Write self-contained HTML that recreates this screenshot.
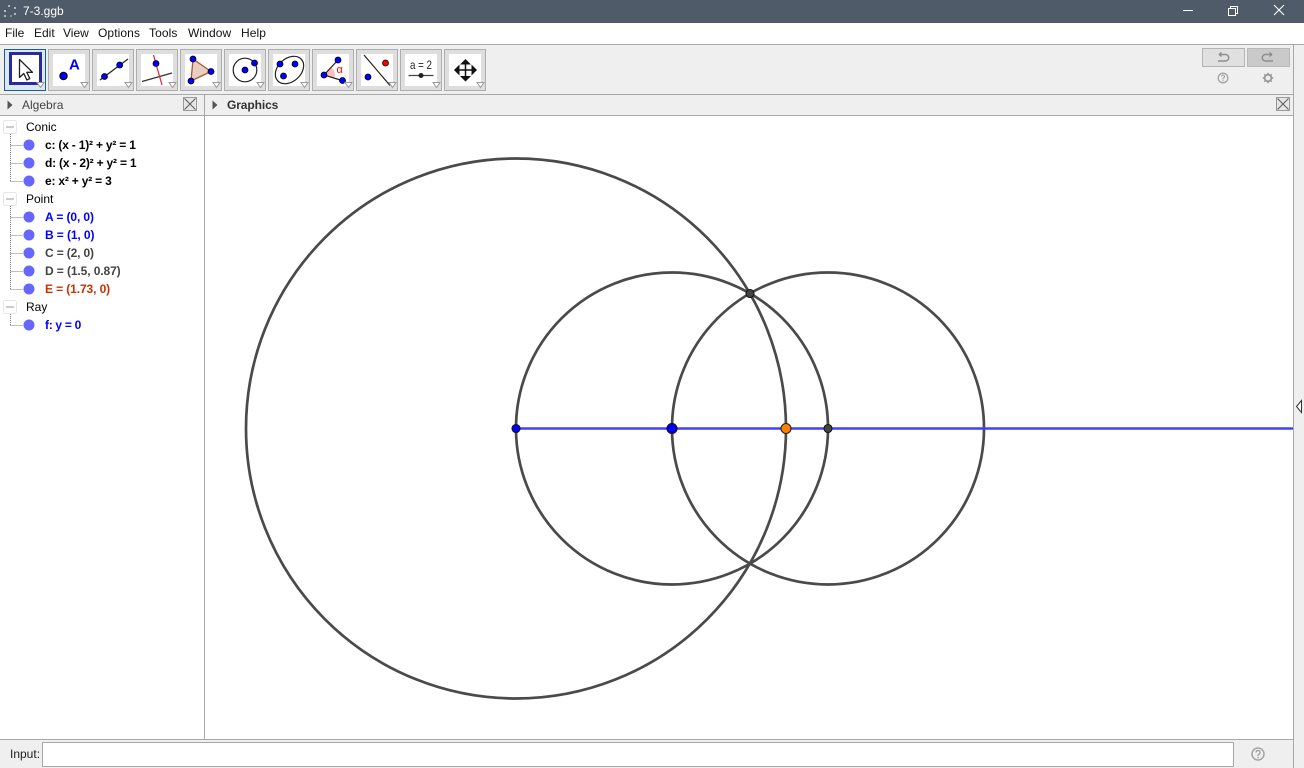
<!DOCTYPE html>
<html><head><meta charset="utf-8"><title>7-3.ggb</title>
<style>
html,body{margin:0;padding:0;width:1304px;height:768px;overflow:hidden;background:#efefef}
body{position:relative;font-family:"Liberation Sans",sans-serif;font-size:12px;color:#000}
.a{position:absolute;white-space:pre}
.m{top:25px;line-height:16px;font-size:12px;color:#111}
.r{left:45px;font-weight:bold;line-height:18px;height:18px;letter-spacing:-.1px}
.g{left:26px;line-height:18px;height:18px}
svg{position:absolute;left:0;top:0}
</style></head><body>
<div class="a" style="left:0;top:0;width:1304px;height:23px;background:#4f5b69"></div>
<div class="a" style="left:23px;top:4px;color:#fff;line-height:15px;font-size:12px">7-3.ggb</div>
<div class="a" style="left:0;top:23px;width:1304px;height:21px;background:#fff"></div>
<div class="a m" style="left:5px">File</div>
<div class="a m" style="left:34px">Edit</div>
<div class="a m" style="left:63px">View</div>
<div class="a m" style="left:98px;letter-spacing:.1px">Options</div>
<div class="a m" style="left:149px;letter-spacing:.1px">Tools</div>
<div class="a m" style="left:188px;letter-spacing:.1px">Window</div>
<div class="a m" style="left:241px;letter-spacing:.1px">Help</div>

<div class="a" style="left:0;top:44px;width:1304px;height:1px;background:#a8a8a8"></div>
<div class="a" style="left:0;top:94px;width:1293px;height:1px;background:#a8a8a8"></div>
<div class="a" style="left:0;top:115px;width:1293px;height:1px;background:#a8a8a8"></div>

<div class="a" style="left:0;top:116px;width:204px;height:623px;background:#fff"></div>
<div class="a" style="left:205px;top:116px;width:1088px;height:623px;background:#fff"></div>
<div class="a" style="left:204px;top:95px;width:1px;height:644px;background:#a8a8a8"></div>
<div class="a" style="left:1293px;top:44px;width:1px;height:724px;background:#a8a8a8"></div>
<div class="a" style="left:0;top:739px;width:1293px;height:1px;background:#a8a8a8"></div>

<div class="a" style="left:22px;top:97px;line-height:16px;color:#444">Algebra</div>
<div class="a" style="left:227px;top:97px;line-height:16px;font-weight:bold;color:#333;letter-spacing:-.1px">Graphics</div>

<div class="a g" style="top:118px">Conic</div>
<div class="a r" style="top:136px;color:#000;letter-spacing:-.2px">c: (x - 1)² + y² = 1</div>
<div class="a r" style="top:154px;color:#000;letter-spacing:-.2px">d: (x - 2)² + y² = 1</div>
<div class="a r" style="top:172px;color:#000;letter-spacing:-.2px">e: x² + y² = 3</div>
<div class="a g" style="top:190px">Point</div>
<div class="a r" style="top:208px;color:#00f">A = (0, 0)</div>
<div class="a r" style="top:226px;color:#00f">B = (1, 0)</div>
<div class="a r" style="top:244px;color:#444;letter-spacing:-.15px">C = (2, 0)</div>
<div class="a r" style="top:262px;color:#444">D = (1.5, 0.87)</div>
<div class="a r" style="top:280px;color:#c83200">E = (1.73, 0)</div>
<div class="a g" style="top:298px">Ray</div>
<div class="a r" style="top:316px;color:#00f;letter-spacing:-.3px">f: y = 0</div>

<div class="a" style="left:10px;top:746px;line-height:16px;color:#222">Input:</div>
<div class="a" style="left:42px;top:742px;width:1190px;height:23px;background:#fff;border:1px solid #a8a8a8"></div>

<svg width="1304" height="768" viewBox="0 0 1304 768" fill="none">
<!-- title icon -->
<g fill="#c9d3e6"><circle cx="5" cy="11" r="1"/><circle cx="9" cy="6" r="1"/><circle cx="15" cy="8" r="1"/><circle cx="15" cy="14" r="1"/><circle cx="5" cy="16" r="1"/><circle cx="11" cy="16" r=".8"/></g>
<!-- window controls -->
<path d="M1183 10.5h10" stroke="#fff"/>
<path d="M1228.5 8.500h7v7h-7zM1230.500 8.500v-2h7v7h-2" stroke="#fff"/>
<path d="M1274 5l10 10M1284 5l-10 10" stroke="#fff" stroke-width="1.100"/>

<!-- toolbar buttons -->
<g id="btns">
<rect x="4.500" y="49.500" width="41" height="41" fill="#d9e8f3" stroke="#1a5e8c"/>
<rect x="10.500" y="53.500" width="30" height="30" fill="#fff" stroke="#2a2a9c" stroke-width="3"/>
<g fill="#dedede" stroke="#aeaeae">
<rect x="48.500" y="49.500" width="41" height="41"/><rect x="92.500" y="49.500" width="41" height="41"/><rect x="136.500" y="49.500" width="41" height="41"/><rect x="180.500" y="49.500" width="41" height="41"/><rect x="224.500" y="49.500" width="41" height="41"/><rect x="268.500" y="49.500" width="41" height="41"/><rect x="312.500" y="49.500" width="41" height="41"/><rect x="356.500" y="49.500" width="41" height="41"/><rect x="400.500" y="49.500" width="41" height="41"/><rect x="444.500" y="49.500" width="41" height="41"/>
</g>
<g fill="#fff"><rect x="53" y="54" width="32" height="32"/><rect x="97" y="54" width="32" height="32"/><rect x="141" y="54" width="32" height="32"/><rect x="185" y="54" width="32" height="32"/><rect x="229" y="54" width="32" height="32"/><rect x="273" y="54" width="32" height="32"/><rect x="317" y="54" width="32" height="32"/><rect x="361" y="54" width="32" height="32"/><rect x="405" y="54" width="32" height="32"/><rect x="449" y="54" width="32" height="32"/></g>
</g>
<!-- arrow -->
<path d="M19.500 59.500v18l4.300-4 3 6.500 3-1.500-3-6.200h5.700z" fill="#fff" stroke="#222" stroke-width="1.300" stroke-linejoin="round"/>
<!-- point A -->
<circle cx="63.500" cy="76" r="3.700" fill="#00f" stroke="#000" stroke-width="1"/>
<text x="69" y="69.500" font-family="Liberation Sans" font-weight="bold" font-size="15" fill="#00f">A</text>
<!-- line -->
<path d="M100 80l28-21" stroke="#222" stroke-width="1.200"/>
<circle cx="104.500" cy="76.500" r="3" fill="#00f" stroke="#000" stroke-width=".8"/><circle cx="119.700" cy="65" r="3" fill="#00f" stroke="#000" stroke-width=".8"/>
<!-- perpendicular -->
<path d="M142 81.500l30-8.500" stroke="#333" stroke-width="1.300"/><path d="M153.500 55l8.500 30" stroke="#e8222c" stroke-width="1.200"/>
<circle cx="156" cy="63.500" r="3" fill="#00f" stroke="#000" stroke-width=".8"/>
<!-- polygon -->
<path d="M193 59l18 12.500-20 9.500z" fill="#e8cfc2" stroke="#a85a30" stroke-width="1.300"/>
<circle cx="193" cy="59" r="3" fill="#00f" stroke="#000" stroke-width=".8"/><circle cx="211" cy="71.500" r="3" fill="#00f" stroke="#000" stroke-width=".8"/><circle cx="191" cy="81" r="3" fill="#00f" stroke="#000" stroke-width=".8"/>
<!-- circle -->
<circle cx="245" cy="70" r="11.800" stroke="#222" stroke-width="1.200"/>
<circle cx="245" cy="70" r="3" fill="#00f" stroke="#000" stroke-width=".8"/><circle cx="254.500" cy="63" r="3" fill="#00f" stroke="#000" stroke-width=".8"/>
<!-- conic -->
<ellipse cx="289.500" cy="70" rx="16" ry="11.500" transform="rotate(-42 289.500 70)" stroke="#222" stroke-width="1.200"/>
<circle cx="280" cy="64" r="3" fill="#00f" stroke="#000" stroke-width=".8"/><circle cx="295" cy="64" r="3" fill="#00f" stroke="#000" stroke-width=".8"/><circle cx="283.500" cy="76" r="3" fill="#00f" stroke="#000" stroke-width=".8"/>
<!-- angle -->
<path d="M324 75L331 67A10.500 10.500 0 0 1 334.500 78z" fill="#ffbcbc"/>
<path d="M338 60l-14 15 18 5.500" stroke="#222" stroke-width="1.200"/>
<circle cx="338" cy="60" r="3" fill="#00f" stroke="#000" stroke-width=".8"/><circle cx="324" cy="75" r="3" fill="#00f" stroke="#000" stroke-width=".8"/><circle cx="342.500" cy="80.500" r="3" fill="#00f" stroke="#000" stroke-width=".8"/>
<text x="336.500" y="73" font-family="Liberation Sans" font-size="11" fill="#f00">α</text>
<!-- line parallel -->
<path d="M364 55l26 30.500" stroke="#222" stroke-width="1.200"/>
<circle cx="385.500" cy="63" r="3" fill="#f00" stroke="#000" stroke-width=".8"/><circle cx="368" cy="77" r="3" fill="#00f" stroke="#000" stroke-width=".8"/>
<!-- slider -->
<text x="410" y="69" font-family="Liberation Sans" font-size="12" fill="#222" textLength="22" lengthAdjust="spacingAndGlyphs">a = 2</text>
<path d="M408.500 75.500h25" stroke="#444" stroke-width="1.200"/><circle cx="421" cy="75.500" r="2.500" fill="#222"/>
<!-- move -->
<path d="M465.500 61v18M456 70h19" stroke="#111" stroke-width="1.500"/>
<path d="M465.500 59l-5.500 5.500h11zM465.500 81.500l-5.500-5.500h11zM454 70l5.500-5.500v11zM477 70l-5.500-5.500v11z" fill="#111"/>
<!-- dropdown triangles -->
<g fill="#fff" stroke="#999" stroke-width="1">
<path d="M37 82.500h7l-3.500 5z"/><path d="M81 82.500h7l-3.500 5z"/><path d="M125 82.500h7l-3.500 5z"/><path d="M169 82.500h7l-3.500 5z"/><path d="M213 82.500h7l-3.500 5z"/><path d="M257 82.500h7l-3.500 5z"/><path d="M301 82.500h7l-3.500 5z"/><path d="M345 82.500h7l-3.500 5z"/><path d="M389 82.500h7l-3.500 5z"/><path d="M433 82.500h7l-3.500 5z"/><path d="M477 82.500h7l-3.500 5z"/>
</g>
<!-- undo / redo -->
<rect x="1202.500" y="48.500" width="42" height="18" fill="#e0e0e0" stroke="#b4b4b4"/>
<rect x="1247.500" y="48.500" width="42" height="18" fill="#cacaca" stroke="#b8b8b8"/>
<path d="M1219 54.500h6.500a3.200 3.200 0 0 1 0 6.500h-7.500M1219 54.500l2.500-2M1219 54.500l2.500 2" stroke="#8e8e8e" stroke-width="1.400"/>
<path d="M1272 54.500h-6.500a3.200 3.200 0 0 0 0 6.500h7.500M1272 54.500l-2.500-2M1272 54.500l-2.500 2" stroke="#8e8e8e" stroke-width="1.400"/>
<!-- help + gear -->
<circle cx="1223" cy="78" r="4.800" stroke="#a4a4a4" stroke-width="1.300"/>
<path d="M1221.500 76.500a1.500 1.500 0 1 1 2.300 1.300l-.8.700v1" stroke="#999" stroke-width="1"/><circle cx="1223" cy="80.700" r=".6" fill="#999"/>
<circle cx="1268" cy="78" r="3.300" stroke="#999" stroke-width="1.800"/>
<path d="M1268 72.700v2M1268 81.300v2M1262.700 78h2M1271.300 78h2M1264.300 74.300l1.300 1.300M1270.400 80.400l1.300 1.300M1264.300 81.700l1.300-1.300M1270.400 75.600l1.300-1.300" stroke="#999" stroke-width="1.500"/>
<!-- panel arrows -->
<path d="M7.500 100.500l5 4.500-5 4.500z" fill="#555"/>
<path d="M212.500 100.500l5 4.500-5 4.500z" fill="#555"/>
<path d="M1301.500 400.500l-5 6 5 6z" fill="#fff" stroke="#333" stroke-width="1"/>
<!-- close buttons -->
<rect x="183.500" y="97.500" width="13" height="13" fill="#e6e6e6" stroke="#999"/><path d="M184.500 98.500l11 11M195.500 98.500l-11 11" stroke="#666" stroke-width="1.200"/>
<rect x="1276.500" y="97.500" width="13" height="13" fill="#e6e6e6" stroke="#999"/><path d="M1277.500 98.500l11 11M1288.500 98.500l-11 11" stroke="#666" stroke-width="1.200"/>
<!-- tree lines -->
<g stroke="#808080" stroke-width="1" stroke-dasharray="1 1">
<path d="M10.500 134v47.500M10.500 145.500H23M10.500 163.500H23M10.500 181.500H23"/>
<path d="M10.500 206v83.500M10.500 217.500H23M10.500 235.500H23M10.500 253.500H23M10.500 271.500H23M10.500 289.500H23"/>
<path d="M10.500 314v11.500M10.500 325.500H23"/>
</g>
<g fill="#fff" stroke="#e6e6e6"><rect x="3.500" y="120.500" width="13" height="13" rx="2"/><rect x="3.500" y="192.500" width="13" height="13" rx="2"/><rect x="3.500" y="300.500" width="13" height="13" rx="2"/></g>
<path d="M6 127h8M6 199h8M6 307h8" stroke="#ccc" stroke-width="2"/>
<g fill="#6666ff"><circle cx="29" cy="145" r="5.500"/><circle cx="29" cy="163" r="5.500"/><circle cx="29" cy="181" r="5.500"/><circle cx="29" cy="217" r="5.500"/><circle cx="29" cy="235" r="5.500"/><circle cx="29" cy="253" r="5.500"/><circle cx="29" cy="271" r="5.500"/><circle cx="29" cy="289" r="5.500"/><circle cx="29" cy="325" r="5.500"/></g>
<!-- help bottom -->
<circle cx="1258" cy="754" r="6" stroke="#a4a4a4" stroke-width="1.500"/>
<path d="M1256 752.500a2 2 0 1 1 3 1.700l-1 .8v1" stroke="#999" stroke-width="1.200"/><circle cx="1258" cy="757.500" r=".8" fill="#999"/>
<!-- graphics -->
<g stroke="#4a4a4a" stroke-width="2.700">
<circle cx="672" cy="428.500" r="156"/>
<circle cx="828" cy="428.500" r="156"/>
<circle cx="516" cy="428.500" r="270"/>
</g>
<path d="M516 428.500H1293" stroke="#4040ff" stroke-width="2.500"/>
<circle cx="516" cy="428.500" r="4" fill="#00f" stroke="#111" stroke-width="1.100"/>
<circle cx="672" cy="428.500" r="5" fill="#00f" stroke="#111" stroke-width="1.100"/>
<circle cx="786" cy="428.500" r="5" fill="#ff7f00" stroke="#222" stroke-width="1.100"/>
<circle cx="828" cy="428.500" r="4" fill="#444" stroke="#111" stroke-width="1.100"/>
<circle cx="750" cy="293.500" r="4" fill="#444" stroke="#111" stroke-width="1.100"/>
</svg>
</body></html>
